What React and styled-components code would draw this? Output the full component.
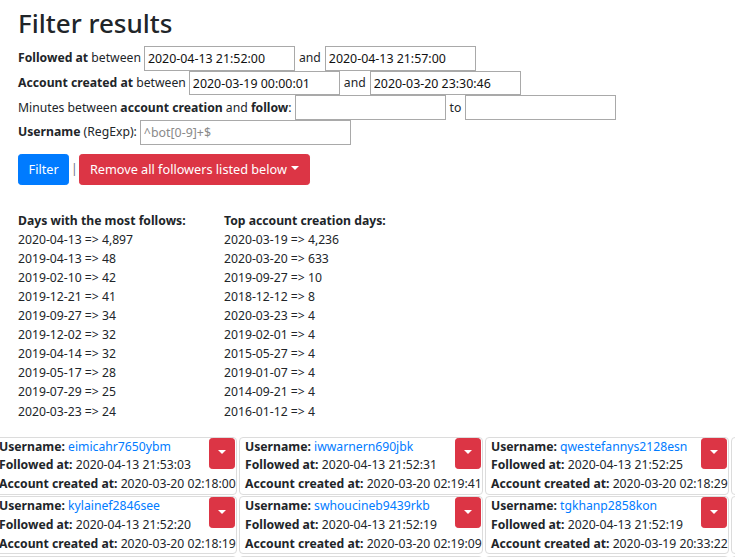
import React from 'react';
import styled, { createGlobalStyle } from 'styled-components';

const GlobalStyle = createGlobalStyle`
  html, body {
    margin: 0;
    padding: 0;
    overflow: hidden;
    background: #fff;
  }
  body {
    font-family: "Segoe UI", "Noto Sans", "Open Sans", sans-serif;
    font-size: 12.2px;
    line-height: 1.5;
    color: #212529;
  }
`;

const Page = styled.div`
  padding: 0 0 0 18px;
  width: 735px;
  box-sizing: border-box;
`;

const Title = styled.h1`
  font-size: 26px;
  font-weight: 500;
  line-height: 1.2;
  margin: 8px 0 7px;
`;

const FieldRow = styled.div`
  display: flex;
  align-items: center;
  height: 24.6px;
  white-space: nowrap;
`;

const Label = styled.span`
  margin-right: 3px;
`;

const Joiner = styled.span`
  margin: 0 4px;
`;

const TextInput = styled.input`
  box-sizing: border-box;
  width: ${({ $wide }) => ($wide ? '211px' : '151px')};
  height: 24.5px;
  padding: 1px 3px;
  border: 1px solid #a9a9a9;
  border-radius: 0;
  font-family: inherit;
  font-size: 12.4px;
  color: #111;
  background: #fff;
  outline: none;

  &::placeholder {
    color: #8a8a8a;
  }
`;

const ButtonRow = styled.div`
  display: flex;
  align-items: center;
  margin-top: 9px;
`;

const Button = styled.button`
  display: inline-flex;
  align-items: center;
  height: 31px;
  padding: 0 9.6px;
  border: 1px solid ${({ $variant }) => ($variant === 'danger' ? '#dc3545' : '#007bff')};
  border-radius: 3.2px;
  background: ${({ $variant }) => ($variant === 'danger' ? '#dc3545' : '#007bff')};
  color: #fff;
  font-family: inherit;
  font-size: 12.7px;
  cursor: pointer;
`;

const Caret = styled.span`
  display: inline-block;
  margin-left: ${({ $solo }) => ($solo ? '0' : '4px')};
  border-top: 4px solid #fff;
  border-left: 4px solid transparent;
  border-right: 4px solid transparent;
  transform: translateY(-1px);
`;

const Separator = styled.span`
  width: 10px;
  text-align: center;
  color: #6c757d;
`;

const Stats = styled.div`
  display: grid;
  grid-template-columns: 206px auto;
  margin-top: 26px;
  line-height: 19.1px;
`;

const StatsHeading = styled.div`
  font-weight: 700;
`;

const Cards = styled.div`
  display: grid;
  grid-template-columns: repeat(4, 244px);
  gap: 1.5px 2px;
  margin: 16px 0 0 -25px;
`;

const Card = styled.div`
  box-sizing: border-box;
  border: 1px solid #dcdcdc;
  border-radius: 4px;
  padding: 0 1px 0 5px;
  line-height: 18.7px;
  white-space: nowrap;
  overflow: hidden;
`;

const CardButton = styled(Button)`
  float: right;
  width: 26px;
  height: 31px;
  padding: 0;
  justify-content: center;
`;

const CardLabel = styled.b`
  font-weight: 700;
`;

const UserLink = styled.a`
  color: #007bff;
  text-decoration: none;
`;

const followDays = [
  ['2020-04-13', '4,897'],
  ['2019-04-13', '48'],
  ['2019-02-10', '42'],
  ['2019-12-21', '41'],
  ['2019-09-27', '34'],
  ['2019-12-02', '32'],
  ['2019-04-14', '32'],
  ['2019-05-17', '28'],
  ['2019-07-29', '25'],
  ['2020-03-23', '24'],
];

const creationDays = [
  ['2020-03-19', '4,236'],
  ['2020-03-20', '633'],
  ['2019-09-27', '10'],
  ['2018-12-12', '8'],
  ['2020-03-23', '4'],
  ['2019-02-01', '4'],
  ['2015-05-27', '4'],
  ['2019-01-07', '4'],
  ['2014-09-21', '4'],
  ['2016-01-12', '4'],
];

const followers = [
  ['eimicahr7650ybm', '2020-04-13 21:53:03', '2020-03-20 02:18:00'],
  ['iwwarnern690jbk', '2020-04-13 21:52:31', '2020-03-20 02:19:41'],
  ['qwestefannys2128esn', '2020-04-13 21:52:25', '2020-03-20 02:18:29'],
  ['mabelorta4471wfe', '2020-04-13 21:52:22', '2020-03-20 02:17:55'],
  ['kylainef2846see', '2020-04-13 21:52:20', '2020-03-20 02:18:19'],
  ['swhoucineb9439rkb', '2020-04-13 21:52:19', '2020-03-20 02:19:09'],
  ['tgkhanp2858kon', '2020-04-13 21:52:19', '2020-03-19 20:33:22'],
  ['dorianeh5312qpa', '2020-04-13 21:52:18', '2020-03-20 02:16:48'],
  ['lruthelm8823bnd', '2020-04-13 21:52:16', '2020-03-20 02:18:40'],
  ['pjanettes1190oqk', '2020-04-13 21:52:15', '2020-03-20 02:19:02'],
  ['zhodgeric7406mtl', '2020-04-13 21:52:14', '2020-03-20 02:17:31'],
  ['ucarmina3359yfe', '2020-04-13 21:52:12', '2020-03-20 02:18:57'],
];

const StatList = ({ title, rows }) => (
  <div>
    <StatsHeading>{title}</StatsHeading>
    {rows.map(([day, count]) => (
      <div key={day}>
        {day} =&gt; {count}
      </div>
    ))}
  </div>
);

export default function App() {
  return (
    <>
      <GlobalStyle />
      <Page>
        <Title>Filter results</Title>

        <FieldRow>
          <Label>
            <b>Followed at</b> between
          </Label>
          <TextInput defaultValue="2020-04-13 21:52:00" />
          <Joiner>and</Joiner>
          <TextInput defaultValue="2020-04-13 21:57:00" />
        </FieldRow>
        <FieldRow>
          <Label>
            <b>Account created at</b> between
          </Label>
          <TextInput defaultValue="2020-03-19 00:00:01" />
          <Joiner>and</Joiner>
          <TextInput defaultValue="2020-03-20 23:30:46" />
        </FieldRow>
        <FieldRow>
          <Label>
            Minutes between <b>account creation</b> and <b>follow</b>:
          </Label>
          <TextInput />
          <Joiner>to</Joiner>
          <TextInput />
        </FieldRow>
        <FieldRow>
          <Label>
            <b>Username</b> (RegExp):
          </Label>
          <TextInput $wide placeholder="^bot[0-9]+$" />
        </FieldRow>

        <ButtonRow>
          <Button>Filter</Button>
          <Separator>|</Separator>
          <Button $variant="danger">
            Remove all followers listed below
            <Caret />
          </Button>
        </ButtonRow>

        <Stats>
          <StatList title="Days with the most follows:" rows={followDays} />
          <StatList title="Top account creation days:" rows={creationDays} />
        </Stats>

        <Cards>
          {followers.map(([name, followed, created]) => (
            <Card key={name}>
              <CardButton $variant="danger" aria-label="Actions">
                <Caret $solo />
              </CardButton>
              <div>
                <CardLabel>Username:</CardLabel> <UserLink href="#">{name}</UserLink>
              </div>
              <div>
                <CardLabel>Followed at:</CardLabel> {followed}
              </div>
              <div>
                <CardLabel>Account created at:</CardLabel> {created}
              </div>
            </Card>
          ))}
        </Cards>
      </Page>
    </>
  );
}
